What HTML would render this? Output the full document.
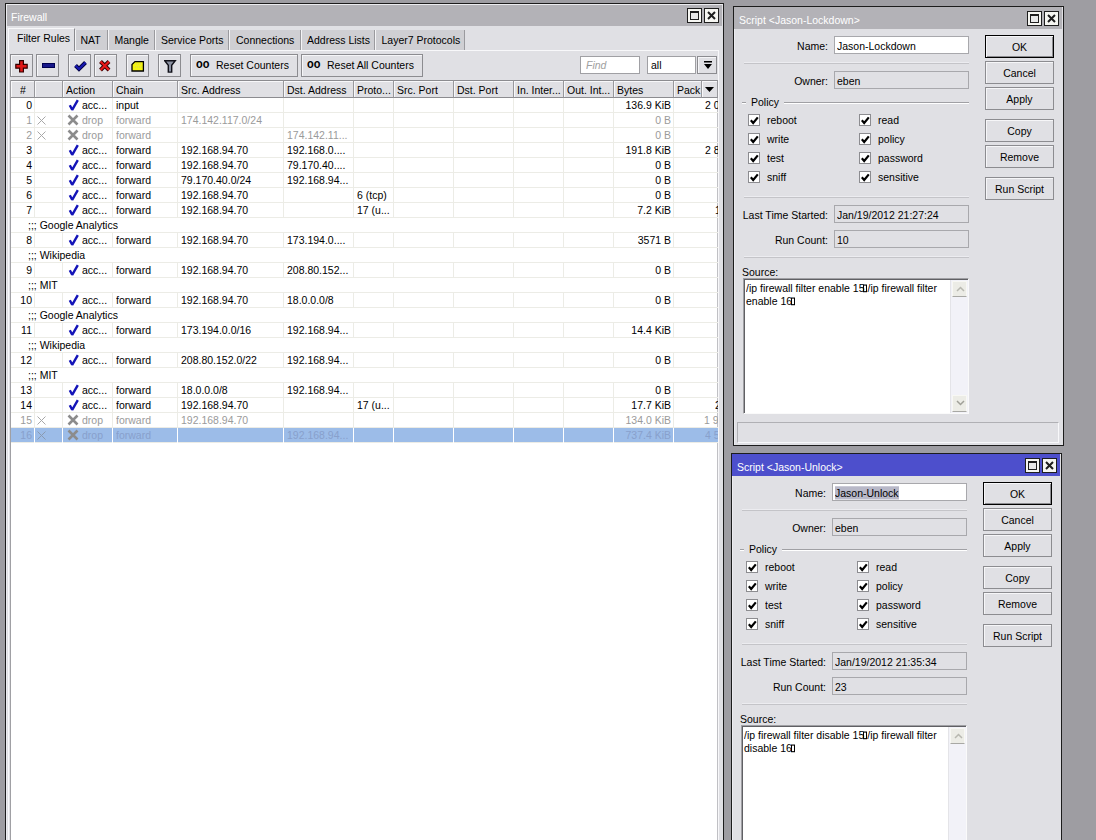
<!DOCTYPE html><html><head><meta charset="utf-8"><style>
*{margin:0;padding:0;box-sizing:border-box}
html,body{width:1096px;height:840px;overflow:hidden;background:#9e9da2}
body{position:relative;font-family:"Liberation Sans",sans-serif;font-size:10.5px;color:#000;}
span{transform:scaleY(1.1);transform-origin:50% 60%}
div,span{position:absolute;white-space:pre}
.t{line-height:13px}
.win{background:#e0e0e4;border:1px solid #1c1c1c}
.title{color:#fff;font-size:10.5px;line-height:13px;-webkit-text-stroke:0}
.btn{background:#e0e0e4;border:1px solid #8c8c90;box-shadow:inset 1px 1px 0 #f6f6f8}
.tab{background:#cfcfd3;border-left:1px solid #f4f4f6;border-right:1px solid #9a9a9e;top:30px;height:20px}
.tab span{top:4px}
.hc{top:0;height:18px;border-top:1px solid #8c8c90;border-right:1px solid #98989c;border-bottom:1px solid #8c8c90;box-shadow:inset 1px 1px 0 #f8f8fa}
.hc span{left:3px;top:3px}
.row{left:0;width:707px;height:15px;border-bottom:1px solid #ecece6}
.c{top:0;height:15px;border-right:1px solid #ecece6}
.c span{top:1px}
.r{right:2px}
.dis{color:#9a9a9a}
.selr{color:#88a0cc}
.fld{background:#fff;border:1px solid #a0a0a4}
.ro{background:#e0e0e4;border:1px solid #a8a8ac}
.sep{height:2px;border-top:1px solid #ececf0;border-bottom:1px solid #c4c4c8}
.grp{height:2px;border-top:1px solid #a0a0a4;border-bottom:1px solid #fff}
.cb{width:12px;height:12px;background:#fff;border:1px solid #8c8c90}
</style></head><body>

<div class="win" style="left:5px;top:3px;width:719px;height:860px;box-shadow:inset 1px 1px 0 #ececf0">
<div style="left:1px;top:1px;width:715px;height:21px;background:#b3b2b7"></div>
<span class="title" style="left:5px;top:7px">Firewall</span>
<svg style="position:absolute;left:681px;top:4px" width="15" height="15" viewBox="0 0 15 15"><rect x="0.5" y="0.5" width="14" height="14" fill="#f6f6f2" stroke="#1e1e1e"/><rect x="3.5" y="3.5" width="8" height="8" fill="#e8e8e8" stroke="#1e1e1e"/><rect x="3" y="3" width="9" height="2" fill="#1e1e1e"/></svg>
<svg style="position:absolute;left:698px;top:4px" width="15" height="15" viewBox="0 0 15 15"><rect x="0.5" y="0.5" width="14" height="14" fill="#f6f6f2" stroke="#1e1e1e"/><path d="M4 4l7 7M11 4l-7 7" stroke="#1e1e1e" stroke-width="2"/></svg>
</div>
<div class="tab" style="left:75px;width:33px"><span style="left:4.5px">NAT</span></div>
<div class="tab" style="left:108px;width:47px"><span style="left:5.5px">Mangle</span></div>
<div class="tab" style="left:155px;width:74px"><span style="left:5.0px">Service Ports</span></div>
<div class="tab" style="left:229px;width:72px"><span style="left:6.0px">Connections</span></div>
<div class="tab" style="left:301px;width:74px"><span style="left:5.0px">Address Lists</span></div>
<div class="tab" style="left:375px;width:90px"><span style="left:5.5px">Layer7 Protocols</span></div>
<div style="left:8px;top:28px;width:67px;height:23px;background:#e0e0e4;border-top:1px solid #f8f8fa;border-left:1px solid #f8f8fa;border-right:1px solid #8a8a8e"><span style="left:8px;top:3px">Filter Rules</span></div>
<div style="left:75px;top:50px;width:644px;height:1px;background:#f8f8fa"></div>
<div style="left:718px;top:50px;width:1px;height:800px;background:#f8f8fa"></div>
<div style="left:8px;top:50px;width:1px;height:800px;background:#f8f8fa"></div>
<div class="btn" style="left:10px;top:54px;width:23px;height:23px"><svg style="position:absolute;left:4px;top:4px" width="14" height="14" viewBox="0 0 14 14"><path d="M4.6 1.6h3.8v3.8h3.8v3.8h-3.8v3.8h-3.8v-3.8h-3.8v-3.8h3.8z" fill="#e01818" stroke="#300" stroke-width="1.2"/></svg></div>
<div class="btn" style="left:36px;top:54px;width:23px;height:23px"><svg style="position:absolute;left:5px;top:8px" width="14" height="6" viewBox="0 0 14 6"><rect x="0.5" y="0.5" width="12" height="4" fill="#18188a" stroke="#000050"/></svg></div>
<div class="btn" style="left:68px;top:54px;width:23px;height:23px"><svg style="position:absolute;left:5px;top:5px" width="14" height="14" viewBox="0 0 14 14"><path d="M1.5 5.5l3.5 3.5l6.5-6.5" fill="none" stroke="#000040" stroke-width="4"/><path d="M1.5 5.5l3.5 3.5l6.5-6.5" fill="none" stroke="#1818b0" stroke-width="2.2"/></svg></div>
<div class="btn" style="left:94px;top:54px;width:23px;height:23px"><svg style="position:absolute;left:4px;top:5px" width="14" height="14" viewBox="0 0 14 14"><path d="M1.5 1.5l8.5 8.5M10 1.5l-8.5 8.5" fill="none" stroke="#300" stroke-width="4"/><path d="M1.5 1.5l8.5 8.5M10 1.5l-8.5 8.5" fill="none" stroke="#e81818" stroke-width="2.2"/></svg></div>
<div class="btn" style="left:126px;top:54px;width:23px;height:23px"><svg style="position:absolute;left:4px;top:6px" width="15" height="12" viewBox="0 0 15 12"><path d="M4 0.6h8.4v9.4h-11.4v-6.4z" fill="#f4f410" stroke="#000" stroke-width="1.3"/><path d="M5 3h6M4 6h7" stroke="#d0d060" stroke-dasharray="1 1"/></svg></div>
<div class="btn" style="left:158px;top:54px;width:23px;height:23px"><svg style="position:absolute;left:5px;top:5px" width="14" height="14" viewBox="0 0 14 14"><path d="M0.7 0.7h10.6l-3.6 4.6v6.8h-3.4v-6.8z" fill="#8a90a0" stroke="#101018" stroke-width="1.4"/></svg></div>
<div class="btn" style="left:190px;top:54px;width:108px;height:23px"><span style="left:5px;top:3px;font-weight:bold;font-size:11px">oo</span><span style="left:25px;top:4px">Reset Counters</span></div>
<div class="btn" style="left:301px;top:54px;width:122px;height:23px"><span style="left:5px;top:3px;font-weight:bold;font-size:11px">oo</span><span style="left:25px;top:4px">Reset All Counters</span></div>
<div class="fld" style="left:580px;top:56px;width:60px;height:18px"><span style="left:5px;top:2px;color:#a0a0a0;font-style:italic">Find</span></div>
<div class="fld" style="left:647px;top:56px;width:49px;height:18px"><span style="left:3px;top:2px">all</span></div>
<div class="btn" style="left:697px;top:56px;width:20px;height:18px"><svg style="position:absolute;left:5px;top:4px" width="10" height="10" viewBox="0 0 10 10"><path d="M1 0h8v1.5h-8z M1 3h8l-4 5z" fill="#000"/></svg></div>
<div style="left:10px;top:80px;width:708px;height:770px;background:#fff;border-left:1px solid #a0a0a4;border-right:1px solid #c0c0c4">
<div class="hc" style="left:0px;width:24px;background:#e0e0e4"><span style="left:9px">#</span></div>
<div class="hc" style="left:24px;width:28px;background:#e0e0e4"></div>
<div class="hc" style="left:52px;width:50px;background:#e0e0e4"><span>Action</span></div>
<div class="hc" style="left:102px;width:65px;background:#e0e0e4"><span>Chain</span></div>
<div class="hc" style="left:167px;width:106px;background:#e0e0e4"><span>Src. Address</span></div>
<div class="hc" style="left:273px;width:70px;background:#e0e0e4"><span>Dst. Address</span></div>
<div class="hc" style="left:343px;width:40px;background:#e0e0e4"><span>Proto...</span></div>
<div class="hc" style="left:383px;width:60px;background:#e0e0e4"><span>Src. Port</span></div>
<div class="hc" style="left:443px;width:60px;background:#e0e0e4"><span>Dst. Port</span></div>
<div class="hc" style="left:503px;width:50px;background:#e0e0e4"><span>In. Inter...</span></div>
<div class="hc" style="left:553px;width:50px;background:#e0e0e4"><span>Out. Int...</span></div>
<div class="hc" style="left:603px;width:60px;background:#e0e0e4"><span>Bytes</span></div>
<div class="hc" style="left:663px;width:28px;background:#e0e0e4"><span>Pack</span></div>
<div class="hc" style="left:691px;width:16px;background:#e0e0e4"></div>
<svg style="position:absolute;left:694px;top:6px" width="10" height="8" viewBox="0 0 10 8"><path d="M0 1h9l-4.5 5z" fill="#000"/></svg>
<div class="row" style="top:18px">
<div class="c" style="left:0px;width:24px"><span class="r">0</span></div>
<div class="c" style="left:24px;width:28px"></div>
<div class="c" style="left:52px;width:50px"><svg style="position:absolute;left:5px;top:1px" width="12" height="13" viewBox="0 0 12 13"><path d="M1.8 6.2l2.4 4.6l5.6-9.6" fill="none" stroke="#1414b8" stroke-width="2.4" stroke-linejoin="bevel"/></svg><span style="left:19px">acc...</span></div>
<div class="c" style="left:102px;width:65px"><span style="left:3px">input</span></div>
<div class="c" style="left:167px;width:106px"><span style="left:3px"></span></div>
<div class="c" style="left:273px;width:70px"><span style="left:3px"></span></div>
<div class="c" style="left:343px;width:40px"><span style="left:3px"></span></div>
<div class="c" style="left:383px;width:60px"></div>
<div class="c" style="left:443px;width:60px"></div>
<div class="c" style="left:503px;width:50px"></div>
<div class="c" style="left:553px;width:50px"></div>
<div class="c" style="left:603px;width:60px"><span class="r">136.9 KiB</span></div>
<div class="c" style="left:663px;width:44px;overflow:hidden;border-right:none"><span style="left:31px">2 048</span></div>
</div>
<div class="row dis" style="top:33px">
<div class="c" style="left:0px;width:24px"><span class="r">1</span></div>
<div class="c" style="left:24px;width:28px"><svg style="position:absolute;left:2px;top:3px" width="10" height="10" viewBox="0 0 10 10"><path d="M0.5 0.5l8 8M8.5 0.5l-8 8" stroke="#a8a8a8" stroke-width="1"/></svg></div>
<div class="c" style="left:52px;width:50px"><svg style="position:absolute;left:4px;top:1px" width="12" height="12" viewBox="0 0 12 12"><path d="M1.5 1.5l9 9M10.5 1.5l-9 9" fill="none" stroke="#8c8c8c" stroke-width="2.6"/></svg><span style="left:19px">drop</span></div>
<div class="c" style="left:102px;width:65px"><span style="left:3px">forward</span></div>
<div class="c" style="left:167px;width:106px"><span style="left:3px">174.142.117.0/24</span></div>
<div class="c" style="left:273px;width:70px"><span style="left:3px"></span></div>
<div class="c" style="left:343px;width:40px"><span style="left:3px"></span></div>
<div class="c" style="left:383px;width:60px"></div>
<div class="c" style="left:443px;width:60px"></div>
<div class="c" style="left:503px;width:50px"></div>
<div class="c" style="left:553px;width:50px"></div>
<div class="c" style="left:603px;width:60px"><span class="r">0 B</span></div>
<div class="c" style="left:663px;width:44px;overflow:hidden;border-right:none"><span style="left:-634px"></span></div>
</div>
<div class="row dis" style="top:48px">
<div class="c" style="left:0px;width:24px"><span class="r">2</span></div>
<div class="c" style="left:24px;width:28px"><svg style="position:absolute;left:2px;top:3px" width="10" height="10" viewBox="0 0 10 10"><path d="M0.5 0.5l8 8M8.5 0.5l-8 8" stroke="#a8a8a8" stroke-width="1"/></svg></div>
<div class="c" style="left:52px;width:50px"><svg style="position:absolute;left:4px;top:1px" width="12" height="12" viewBox="0 0 12 12"><path d="M1.5 1.5l9 9M10.5 1.5l-9 9" fill="none" stroke="#8c8c8c" stroke-width="2.6"/></svg><span style="left:19px">drop</span></div>
<div class="c" style="left:102px;width:65px"><span style="left:3px">forward</span></div>
<div class="c" style="left:167px;width:106px"><span style="left:3px"></span></div>
<div class="c" style="left:273px;width:70px"><span style="left:3px">174.142.11...</span></div>
<div class="c" style="left:343px;width:40px"><span style="left:3px"></span></div>
<div class="c" style="left:383px;width:60px"></div>
<div class="c" style="left:443px;width:60px"></div>
<div class="c" style="left:503px;width:50px"></div>
<div class="c" style="left:553px;width:50px"></div>
<div class="c" style="left:603px;width:60px"><span class="r">0 B</span></div>
<div class="c" style="left:663px;width:44px;overflow:hidden;border-right:none"><span style="left:-634px"></span></div>
</div>
<div class="row" style="top:63px">
<div class="c" style="left:0px;width:24px"><span class="r">3</span></div>
<div class="c" style="left:24px;width:28px"></div>
<div class="c" style="left:52px;width:50px"><svg style="position:absolute;left:5px;top:1px" width="12" height="13" viewBox="0 0 12 13"><path d="M1.8 6.2l2.4 4.6l5.6-9.6" fill="none" stroke="#1414b8" stroke-width="2.4" stroke-linejoin="bevel"/></svg><span style="left:19px">acc...</span></div>
<div class="c" style="left:102px;width:65px"><span style="left:3px">forward</span></div>
<div class="c" style="left:167px;width:106px"><span style="left:3px">192.168.94.70</span></div>
<div class="c" style="left:273px;width:70px"><span style="left:3px">192.168.0....</span></div>
<div class="c" style="left:343px;width:40px"><span style="left:3px"></span></div>
<div class="c" style="left:383px;width:60px"></div>
<div class="c" style="left:443px;width:60px"></div>
<div class="c" style="left:503px;width:50px"></div>
<div class="c" style="left:553px;width:50px"></div>
<div class="c" style="left:603px;width:60px"><span class="r">191.8 KiB</span></div>
<div class="c" style="left:663px;width:44px;overflow:hidden;border-right:none"><span style="left:31px">2 873</span></div>
</div>
<div class="row" style="top:78px">
<div class="c" style="left:0px;width:24px"><span class="r">4</span></div>
<div class="c" style="left:24px;width:28px"></div>
<div class="c" style="left:52px;width:50px"><svg style="position:absolute;left:5px;top:1px" width="12" height="13" viewBox="0 0 12 13"><path d="M1.8 6.2l2.4 4.6l5.6-9.6" fill="none" stroke="#1414b8" stroke-width="2.4" stroke-linejoin="bevel"/></svg><span style="left:19px">acc...</span></div>
<div class="c" style="left:102px;width:65px"><span style="left:3px">forward</span></div>
<div class="c" style="left:167px;width:106px"><span style="left:3px">192.168.94.70</span></div>
<div class="c" style="left:273px;width:70px"><span style="left:3px">79.170.40....</span></div>
<div class="c" style="left:343px;width:40px"><span style="left:3px"></span></div>
<div class="c" style="left:383px;width:60px"></div>
<div class="c" style="left:443px;width:60px"></div>
<div class="c" style="left:503px;width:50px"></div>
<div class="c" style="left:553px;width:50px"></div>
<div class="c" style="left:603px;width:60px"><span class="r">0 B</span></div>
<div class="c" style="left:663px;width:44px;overflow:hidden;border-right:none"><span style="left:-634px"></span></div>
</div>
<div class="row" style="top:93px">
<div class="c" style="left:0px;width:24px"><span class="r">5</span></div>
<div class="c" style="left:24px;width:28px"></div>
<div class="c" style="left:52px;width:50px"><svg style="position:absolute;left:5px;top:1px" width="12" height="13" viewBox="0 0 12 13"><path d="M1.8 6.2l2.4 4.6l5.6-9.6" fill="none" stroke="#1414b8" stroke-width="2.4" stroke-linejoin="bevel"/></svg><span style="left:19px">acc...</span></div>
<div class="c" style="left:102px;width:65px"><span style="left:3px">forward</span></div>
<div class="c" style="left:167px;width:106px"><span style="left:3px">79.170.40.0/24</span></div>
<div class="c" style="left:273px;width:70px"><span style="left:3px">192.168.94...</span></div>
<div class="c" style="left:343px;width:40px"><span style="left:3px"></span></div>
<div class="c" style="left:383px;width:60px"></div>
<div class="c" style="left:443px;width:60px"></div>
<div class="c" style="left:503px;width:50px"></div>
<div class="c" style="left:553px;width:50px"></div>
<div class="c" style="left:603px;width:60px"><span class="r">0 B</span></div>
<div class="c" style="left:663px;width:44px;overflow:hidden;border-right:none"><span style="left:-634px"></span></div>
</div>
<div class="row" style="top:108px">
<div class="c" style="left:0px;width:24px"><span class="r">6</span></div>
<div class="c" style="left:24px;width:28px"></div>
<div class="c" style="left:52px;width:50px"><svg style="position:absolute;left:5px;top:1px" width="12" height="13" viewBox="0 0 12 13"><path d="M1.8 6.2l2.4 4.6l5.6-9.6" fill="none" stroke="#1414b8" stroke-width="2.4" stroke-linejoin="bevel"/></svg><span style="left:19px">acc...</span></div>
<div class="c" style="left:102px;width:65px"><span style="left:3px">forward</span></div>
<div class="c" style="left:167px;width:106px"><span style="left:3px">192.168.94.70</span></div>
<div class="c" style="left:273px;width:70px"><span style="left:3px"></span></div>
<div class="c" style="left:343px;width:40px"><span style="left:3px">6 (tcp)</span></div>
<div class="c" style="left:383px;width:60px"></div>
<div class="c" style="left:443px;width:60px"></div>
<div class="c" style="left:503px;width:50px"></div>
<div class="c" style="left:553px;width:50px"></div>
<div class="c" style="left:603px;width:60px"><span class="r">0 B</span></div>
<div class="c" style="left:663px;width:44px;overflow:hidden;border-right:none"><span style="left:-634px"></span></div>
</div>
<div class="row" style="top:123px">
<div class="c" style="left:0px;width:24px"><span class="r">7</span></div>
<div class="c" style="left:24px;width:28px"></div>
<div class="c" style="left:52px;width:50px"><svg style="position:absolute;left:5px;top:1px" width="12" height="13" viewBox="0 0 12 13"><path d="M1.8 6.2l2.4 4.6l5.6-9.6" fill="none" stroke="#1414b8" stroke-width="2.4" stroke-linejoin="bevel"/></svg><span style="left:19px">acc...</span></div>
<div class="c" style="left:102px;width:65px"><span style="left:3px">forward</span></div>
<div class="c" style="left:167px;width:106px"><span style="left:3px">192.168.94.70</span></div>
<div class="c" style="left:273px;width:70px"><span style="left:3px"></span></div>
<div class="c" style="left:343px;width:40px"><span style="left:3px">17 (u...</span></div>
<div class="c" style="left:383px;width:60px"></div>
<div class="c" style="left:443px;width:60px"></div>
<div class="c" style="left:503px;width:50px"></div>
<div class="c" style="left:553px;width:50px"></div>
<div class="c" style="left:603px;width:60px"><span class="r">7.2 KiB</span></div>
<div class="c" style="left:663px;width:44px;overflow:hidden;border-right:none"><span style="left:41px">137</span></div>
</div>
<div class="row" style="top:138px"><span style="left:17px;top:1px">;;; Google Analytics</span></div>
<div class="row" style="top:153px">
<div class="c" style="left:0px;width:24px"><span class="r">8</span></div>
<div class="c" style="left:24px;width:28px"></div>
<div class="c" style="left:52px;width:50px"><svg style="position:absolute;left:5px;top:1px" width="12" height="13" viewBox="0 0 12 13"><path d="M1.8 6.2l2.4 4.6l5.6-9.6" fill="none" stroke="#1414b8" stroke-width="2.4" stroke-linejoin="bevel"/></svg><span style="left:19px">acc...</span></div>
<div class="c" style="left:102px;width:65px"><span style="left:3px">forward</span></div>
<div class="c" style="left:167px;width:106px"><span style="left:3px">192.168.94.70</span></div>
<div class="c" style="left:273px;width:70px"><span style="left:3px">173.194.0....</span></div>
<div class="c" style="left:343px;width:40px"><span style="left:3px"></span></div>
<div class="c" style="left:383px;width:60px"></div>
<div class="c" style="left:443px;width:60px"></div>
<div class="c" style="left:503px;width:50px"></div>
<div class="c" style="left:553px;width:50px"></div>
<div class="c" style="left:603px;width:60px"><span class="r">3571 B</span></div>
<div class="c" style="left:663px;width:44px;overflow:hidden;border-right:none"><span style="left:-634px"></span></div>
</div>
<div class="row" style="top:168px"><span style="left:17px;top:1px">;;; Wikipedia</span></div>
<div class="row" style="top:183px">
<div class="c" style="left:0px;width:24px"><span class="r">9</span></div>
<div class="c" style="left:24px;width:28px"></div>
<div class="c" style="left:52px;width:50px"><svg style="position:absolute;left:5px;top:1px" width="12" height="13" viewBox="0 0 12 13"><path d="M1.8 6.2l2.4 4.6l5.6-9.6" fill="none" stroke="#1414b8" stroke-width="2.4" stroke-linejoin="bevel"/></svg><span style="left:19px">acc...</span></div>
<div class="c" style="left:102px;width:65px"><span style="left:3px">forward</span></div>
<div class="c" style="left:167px;width:106px"><span style="left:3px">192.168.94.70</span></div>
<div class="c" style="left:273px;width:70px"><span style="left:3px">208.80.152...</span></div>
<div class="c" style="left:343px;width:40px"><span style="left:3px"></span></div>
<div class="c" style="left:383px;width:60px"></div>
<div class="c" style="left:443px;width:60px"></div>
<div class="c" style="left:503px;width:50px"></div>
<div class="c" style="left:553px;width:50px"></div>
<div class="c" style="left:603px;width:60px"><span class="r">0 B</span></div>
<div class="c" style="left:663px;width:44px;overflow:hidden;border-right:none"><span style="left:-634px"></span></div>
</div>
<div class="row" style="top:198px"><span style="left:17px;top:1px">;;; MIT</span></div>
<div class="row" style="top:213px">
<div class="c" style="left:0px;width:24px"><span class="r">10</span></div>
<div class="c" style="left:24px;width:28px"></div>
<div class="c" style="left:52px;width:50px"><svg style="position:absolute;left:5px;top:1px" width="12" height="13" viewBox="0 0 12 13"><path d="M1.8 6.2l2.4 4.6l5.6-9.6" fill="none" stroke="#1414b8" stroke-width="2.4" stroke-linejoin="bevel"/></svg><span style="left:19px">acc...</span></div>
<div class="c" style="left:102px;width:65px"><span style="left:3px">forward</span></div>
<div class="c" style="left:167px;width:106px"><span style="left:3px">192.168.94.70</span></div>
<div class="c" style="left:273px;width:70px"><span style="left:3px">18.0.0.0/8</span></div>
<div class="c" style="left:343px;width:40px"><span style="left:3px"></span></div>
<div class="c" style="left:383px;width:60px"></div>
<div class="c" style="left:443px;width:60px"></div>
<div class="c" style="left:503px;width:50px"></div>
<div class="c" style="left:553px;width:50px"></div>
<div class="c" style="left:603px;width:60px"><span class="r">0 B</span></div>
<div class="c" style="left:663px;width:44px;overflow:hidden;border-right:none"><span style="left:-634px"></span></div>
</div>
<div class="row" style="top:228px"><span style="left:17px;top:1px">;;; Google Analytics</span></div>
<div class="row" style="top:243px">
<div class="c" style="left:0px;width:24px"><span class="r">11</span></div>
<div class="c" style="left:24px;width:28px"></div>
<div class="c" style="left:52px;width:50px"><svg style="position:absolute;left:5px;top:1px" width="12" height="13" viewBox="0 0 12 13"><path d="M1.8 6.2l2.4 4.6l5.6-9.6" fill="none" stroke="#1414b8" stroke-width="2.4" stroke-linejoin="bevel"/></svg><span style="left:19px">acc...</span></div>
<div class="c" style="left:102px;width:65px"><span style="left:3px">forward</span></div>
<div class="c" style="left:167px;width:106px"><span style="left:3px">173.194.0.0/16</span></div>
<div class="c" style="left:273px;width:70px"><span style="left:3px">192.168.94...</span></div>
<div class="c" style="left:343px;width:40px"><span style="left:3px"></span></div>
<div class="c" style="left:383px;width:60px"></div>
<div class="c" style="left:443px;width:60px"></div>
<div class="c" style="left:503px;width:50px"></div>
<div class="c" style="left:553px;width:50px"></div>
<div class="c" style="left:603px;width:60px"><span class="r">14.4 KiB</span></div>
<div class="c" style="left:663px;width:44px;overflow:hidden;border-right:none"><span style="left:-634px"></span></div>
</div>
<div class="row" style="top:258px"><span style="left:17px;top:1px">;;; Wikipedia</span></div>
<div class="row" style="top:273px">
<div class="c" style="left:0px;width:24px"><span class="r">12</span></div>
<div class="c" style="left:24px;width:28px"></div>
<div class="c" style="left:52px;width:50px"><svg style="position:absolute;left:5px;top:1px" width="12" height="13" viewBox="0 0 12 13"><path d="M1.8 6.2l2.4 4.6l5.6-9.6" fill="none" stroke="#1414b8" stroke-width="2.4" stroke-linejoin="bevel"/></svg><span style="left:19px">acc...</span></div>
<div class="c" style="left:102px;width:65px"><span style="left:3px">forward</span></div>
<div class="c" style="left:167px;width:106px"><span style="left:3px">208.80.152.0/22</span></div>
<div class="c" style="left:273px;width:70px"><span style="left:3px">192.168.94...</span></div>
<div class="c" style="left:343px;width:40px"><span style="left:3px"></span></div>
<div class="c" style="left:383px;width:60px"></div>
<div class="c" style="left:443px;width:60px"></div>
<div class="c" style="left:503px;width:50px"></div>
<div class="c" style="left:553px;width:50px"></div>
<div class="c" style="left:603px;width:60px"><span class="r">0 B</span></div>
<div class="c" style="left:663px;width:44px;overflow:hidden;border-right:none"><span style="left:-634px"></span></div>
</div>
<div class="row" style="top:288px"><span style="left:17px;top:1px">;;; MIT</span></div>
<div class="row" style="top:303px">
<div class="c" style="left:0px;width:24px"><span class="r">13</span></div>
<div class="c" style="left:24px;width:28px"></div>
<div class="c" style="left:52px;width:50px"><svg style="position:absolute;left:5px;top:1px" width="12" height="13" viewBox="0 0 12 13"><path d="M1.8 6.2l2.4 4.6l5.6-9.6" fill="none" stroke="#1414b8" stroke-width="2.4" stroke-linejoin="bevel"/></svg><span style="left:19px">acc...</span></div>
<div class="c" style="left:102px;width:65px"><span style="left:3px">forward</span></div>
<div class="c" style="left:167px;width:106px"><span style="left:3px">18.0.0.0/8</span></div>
<div class="c" style="left:273px;width:70px"><span style="left:3px">192.168.94...</span></div>
<div class="c" style="left:343px;width:40px"><span style="left:3px"></span></div>
<div class="c" style="left:383px;width:60px"></div>
<div class="c" style="left:443px;width:60px"></div>
<div class="c" style="left:503px;width:50px"></div>
<div class="c" style="left:553px;width:50px"></div>
<div class="c" style="left:603px;width:60px"><span class="r">0 B</span></div>
<div class="c" style="left:663px;width:44px;overflow:hidden;border-right:none"><span style="left:-634px"></span></div>
</div>
<div class="row" style="top:318px">
<div class="c" style="left:0px;width:24px"><span class="r">14</span></div>
<div class="c" style="left:24px;width:28px"></div>
<div class="c" style="left:52px;width:50px"><svg style="position:absolute;left:5px;top:1px" width="12" height="13" viewBox="0 0 12 13"><path d="M1.8 6.2l2.4 4.6l5.6-9.6" fill="none" stroke="#1414b8" stroke-width="2.4" stroke-linejoin="bevel"/></svg><span style="left:19px">acc...</span></div>
<div class="c" style="left:102px;width:65px"><span style="left:3px">forward</span></div>
<div class="c" style="left:167px;width:106px"><span style="left:3px">192.168.94.70</span></div>
<div class="c" style="left:273px;width:70px"><span style="left:3px"></span></div>
<div class="c" style="left:343px;width:40px"><span style="left:3px">17 (u...</span></div>
<div class="c" style="left:383px;width:60px"></div>
<div class="c" style="left:443px;width:60px"></div>
<div class="c" style="left:503px;width:50px"></div>
<div class="c" style="left:553px;width:50px"></div>
<div class="c" style="left:603px;width:60px"><span class="r">17.7 KiB</span></div>
<div class="c" style="left:663px;width:44px;overflow:hidden;border-right:none"><span style="left:41px">241</span></div>
</div>
<div class="row dis" style="top:333px">
<div class="c" style="left:0px;width:24px"><span class="r">15</span></div>
<div class="c" style="left:24px;width:28px"><svg style="position:absolute;left:2px;top:3px" width="10" height="10" viewBox="0 0 10 10"><path d="M0.5 0.5l8 8M8.5 0.5l-8 8" stroke="#a8a8a8" stroke-width="1"/></svg></div>
<div class="c" style="left:52px;width:50px"><svg style="position:absolute;left:4px;top:1px" width="12" height="12" viewBox="0 0 12 12"><path d="M1.5 1.5l9 9M10.5 1.5l-9 9" fill="none" stroke="#8c8c8c" stroke-width="2.6"/></svg><span style="left:19px">drop</span></div>
<div class="c" style="left:102px;width:65px"><span style="left:3px">forward</span></div>
<div class="c" style="left:167px;width:106px"><span style="left:3px">192.168.94.70</span></div>
<div class="c" style="left:273px;width:70px"><span style="left:3px"></span></div>
<div class="c" style="left:343px;width:40px"><span style="left:3px"></span></div>
<div class="c" style="left:383px;width:60px"></div>
<div class="c" style="left:443px;width:60px"></div>
<div class="c" style="left:503px;width:50px"></div>
<div class="c" style="left:553px;width:50px"></div>
<div class="c" style="left:603px;width:60px"><span class="r">134.0 KiB</span></div>
<div class="c" style="left:663px;width:44px;overflow:hidden;border-right:none"><span style="left:30px">1 961</span></div>
</div>
<div class="row selr" style="top:348px;background:#9cbce8">
<div class="c" style="left:0px;width:24px;border-right-color:#fff"><span class="r">16</span></div>
<div class="c" style="left:24px;width:28px;border-right-color:#fff"><svg style="position:absolute;left:2px;top:3px" width="10" height="10" viewBox="0 0 10 10"><path d="M0.5 0.5l8 8M8.5 0.5l-8 8" stroke="#8a9ab0" stroke-width="1"/></svg></div>
<div class="c" style="left:52px;width:50px;border-right-color:#fff"><svg style="position:absolute;left:4px;top:1px" width="12" height="12" viewBox="0 0 12 12"><path d="M1.5 1.5l9 9M10.5 1.5l-9 9" fill="none" stroke="#8c8c8c" stroke-width="2.6"/></svg><span style="left:19px">drop</span></div>
<div class="c" style="left:102px;width:65px;border-right-color:#fff"><span style="left:3px">forward</span></div>
<div class="c" style="left:167px;width:106px;border-right-color:#fff"><span style="left:3px"></span></div>
<div class="c" style="left:273px;width:70px;border-right-color:#fff"><span style="left:3px">192.168.94...</span></div>
<div class="c" style="left:343px;width:40px;border-right-color:#fff"><span style="left:3px"></span></div>
<div class="c" style="left:383px;width:60px;border-right-color:#fff"></div>
<div class="c" style="left:443px;width:60px;border-right-color:#fff"></div>
<div class="c" style="left:503px;width:50px;border-right-color:#fff"></div>
<div class="c" style="left:553px;width:50px;border-right-color:#fff"></div>
<div class="c" style="left:603px;width:60px;border-right-color:#fff"><span class="r">737.4 KiB</span></div>
<div class="c" style="left:663px;width:44px;overflow:hidden;border-right:none"><span style="left:31px">4 512</span></div>
</div>
</div>
<div class="win" style="left:733px;top:6px;width:331px;height:440px;box-shadow:inset 1px 1px 0 #ececf0">
<div style="left:0px;top:0px;width:328px;height:22px;background:#b3b2b7"></div>
<span class="title" style="left:5px;top:7px">Script &lt;Jason-Lockdown&gt;</span>
<svg style="position:absolute;left:293px;top:4px" width="15" height="15" viewBox="0 0 15 15"><rect x="0.5" y="0.5" width="14" height="14" fill="#f6f6f2" stroke="#1e1e1e"/><rect x="3.5" y="3.5" width="8" height="8" fill="#e8e8e8" stroke="#1e1e1e"/><rect x="3" y="3" width="9" height="2" fill="#1e1e1e"/></svg>
<svg style="position:absolute;left:310px;top:4px" width="15" height="15" viewBox="0 0 15 15"><rect x="0.5" y="0.5" width="14" height="14" fill="#f6f6f2" stroke="#1e1e1e"/><path d="M4 4l7 7M11 4l-7 7" stroke="#1e1e1e" stroke-width="2"/></svg>
<span style="right:235px;top:33px">Name:</span>
<div class="fld" style="left:100px;top:29px;width:135px;height:18px;box-shadow:none;border-color:#a8a8ac"><span style="left:2px;top:3px">Jason-Lockdown</span></div>
<div class="sep" style="left:10px;top:55px;width:225px"></div>
<span style="right:235px;top:68px">Owner:</span>
<div class="ro" style="left:100px;top:64px;width:135px;height:18px"><span style="left:2px;top:3px">eben</span></div>
<div class="grp" style="left:8px;top:95px;width:4px"></div>
<span style="left:17px;top:89px">Policy</span>
<div class="grp" style="left:50px;top:95px;width:185px"></div>
<div class="cb" style="left:14px;top:107px"><svg style="position:absolute;left:1px;top:1px" width="9" height="9" viewBox="0 0 9 9"><path d="M0.8 4.2l2.4 2.8l4.6-5.6" fill="none" stroke="#000" stroke-width="2.2"/></svg></div>
<span style="left:33px;top:107px">reboot</span>
<div class="cb" style="left:125px;top:107px"><svg style="position:absolute;left:1px;top:1px" width="9" height="9" viewBox="0 0 9 9"><path d="M0.8 4.2l2.4 2.8l4.6-5.6" fill="none" stroke="#000" stroke-width="2.2"/></svg></div>
<span style="left:144px;top:107px">read</span>
<div class="cb" style="left:14px;top:126px"><svg style="position:absolute;left:1px;top:1px" width="9" height="9" viewBox="0 0 9 9"><path d="M0.8 4.2l2.4 2.8l4.6-5.6" fill="none" stroke="#000" stroke-width="2.2"/></svg></div>
<span style="left:33px;top:126px">write</span>
<div class="cb" style="left:125px;top:126px"><svg style="position:absolute;left:1px;top:1px" width="9" height="9" viewBox="0 0 9 9"><path d="M0.8 4.2l2.4 2.8l4.6-5.6" fill="none" stroke="#000" stroke-width="2.2"/></svg></div>
<span style="left:144px;top:126px">policy</span>
<div class="cb" style="left:14px;top:145px"><svg style="position:absolute;left:1px;top:1px" width="9" height="9" viewBox="0 0 9 9"><path d="M0.8 4.2l2.4 2.8l4.6-5.6" fill="none" stroke="#000" stroke-width="2.2"/></svg></div>
<span style="left:33px;top:145px">test</span>
<div class="cb" style="left:125px;top:145px"><svg style="position:absolute;left:1px;top:1px" width="9" height="9" viewBox="0 0 9 9"><path d="M0.8 4.2l2.4 2.8l4.6-5.6" fill="none" stroke="#000" stroke-width="2.2"/></svg></div>
<span style="left:144px;top:145px">password</span>
<div class="cb" style="left:14px;top:164px"><svg style="position:absolute;left:1px;top:1px" width="9" height="9" viewBox="0 0 9 9"><path d="M0.8 4.2l2.4 2.8l4.6-5.6" fill="none" stroke="#000" stroke-width="2.2"/></svg></div>
<span style="left:33px;top:164px">sniff</span>
<div class="cb" style="left:125px;top:164px"><svg style="position:absolute;left:1px;top:1px" width="9" height="9" viewBox="0 0 9 9"><path d="M0.8 4.2l2.4 2.8l4.6-5.6" fill="none" stroke="#000" stroke-width="2.2"/></svg></div>
<span style="left:144px;top:164px">sensitive</span>
<div class="sep" style="left:10px;top:189px;width:225px"></div>
<span style="right:235px;top:202px">Last Time Started:</span>
<div class="ro" style="left:100px;top:198px;width:135px;height:18px"><span style="left:2px;top:3px">Jan/19/2012 21:27:24</span></div>
<span style="right:235px;top:227px">Run Count:</span>
<div class="ro" style="left:100px;top:223px;width:135px;height:18px"><span style="left:2px;top:3px">10</span></div>
<div class="sep" style="left:10px;top:249px;width:225px"></div>
<span style="left:8px;top:259px">Source:</span>
<div class="fld" style="left:9px;top:271px;width:226px;height:136px;border-color:#a0a0a4 #fafafa #fafafa #a0a0a4;box-shadow:inset 1px 1px 0 #606064"><span class="t" style="left:2px;top:3px">/ip firewall filter enable 15<b class="bx"></b>/ip firewall filter</span><span class="t" style="left:2px;top:16px">enable 16<b class="bx"></b></span>
<div style="left:206px;top:1px;width:18px;height:133px;background:#f2f2f8;border-left:1px solid #e4e4e8"><div style="left:1px;top:1px;width:15px;height:16px;background:#ececE6;border:1px solid #f8f8f4;border-bottom-color:#a8a8a4"><svg style="position:absolute;left:3px;top:4px" width="9" height="6" viewBox="0 0 9 6"><path d="M1 5l3.5-3.5l3.5 3.5" fill="none" stroke="#b8b8b0" stroke-width="1.5"/></svg></div><div style="left:1px;top:115px;width:15px;height:17px;background:#ececE6;border:1px solid #f8f8f4;border-bottom-color:#a8a8a4"><svg style="position:absolute;left:3px;top:4px" width="9" height="6" viewBox="0 0 9 6"><path d="M1 1l3.5 3.5l3.5-3.5" fill="none" stroke="#a0a098" stroke-width="1.5"/></svg></div></div>
</div>
<div style="left:3px;top:415px;width:322px;height:21px;border:1px solid #b0b0b4;border-right-color:#f8f8fa;border-bottom-color:#f8f8fa"></div>
<div class="btn" style="left:251px;top:28px;width:69px;height:23px;border:1px solid #000;box-shadow:inset 1px 1px 0 #f6f6f8, inset -1px -1px 0 #8c8c90"><span style="left:0;width:67px;text-align:center;top:5px">OK</span></div>
<div class="btn" style="left:251px;top:54px;width:69px;height:23px;"><span style="left:0;width:67px;text-align:center;top:5px">Cancel</span></div>
<div class="btn" style="left:251px;top:80px;width:69px;height:23px;"><span style="left:0;width:67px;text-align:center;top:5px">Apply</span></div>
<div class="btn" style="left:251px;top:112px;width:69px;height:23px;"><span style="left:0;width:67px;text-align:center;top:5px">Copy</span></div>
<div class="btn" style="left:251px;top:138px;width:69px;height:23px;"><span style="left:0;width:67px;text-align:center;top:5px">Remove</span></div>
<div class="btn" style="left:251px;top:170px;width:69px;height:23px;"><span style="left:0;width:67px;text-align:center;top:5px">Run Script</span></div>
</div>
<div class="win" style="left:731px;top:453px;width:331px;height:420px;box-shadow:inset 1px 1px 0 #ececf0">
<div style="left:0px;top:0px;width:328px;height:22px;background:#4d4fcc"></div>
<span class="title" style="left:5px;top:7px">Script &lt;Jason-Unlock&gt;</span>
<svg style="position:absolute;left:293px;top:4px" width="15" height="15" viewBox="0 0 15 15"><rect x="0.5" y="0.5" width="14" height="14" fill="#f6f6f2" stroke="#1e1e1e"/><rect x="3.5" y="3.5" width="8" height="8" fill="#e8e8e8" stroke="#1e1e1e"/><rect x="3" y="3" width="9" height="2" fill="#1e1e1e"/></svg>
<svg style="position:absolute;left:310px;top:4px" width="15" height="15" viewBox="0 0 15 15"><rect x="0.5" y="0.5" width="14" height="14" fill="#f6f6f2" stroke="#1e1e1e"/><path d="M4 4l7 7M11 4l-7 7" stroke="#1e1e1e" stroke-width="2"/></svg>
<span style="right:235px;top:33px">Name:</span>
<div class="fld" style="left:100px;top:29px;width:135px;height:18px;box-shadow:none;border-color:#a8a8ac"><span style="left:2px;top:3px;background:#b8b8c8">Jason-Unlock</span></div>
<div class="sep" style="left:10px;top:55px;width:225px"></div>
<span style="right:235px;top:68px">Owner:</span>
<div class="ro" style="left:100px;top:64px;width:135px;height:18px"><span style="left:2px;top:3px">eben</span></div>
<div class="grp" style="left:8px;top:95px;width:4px"></div>
<span style="left:17px;top:89px">Policy</span>
<div class="grp" style="left:50px;top:95px;width:185px"></div>
<div class="cb" style="left:14px;top:107px"><svg style="position:absolute;left:1px;top:1px" width="9" height="9" viewBox="0 0 9 9"><path d="M0.8 4.2l2.4 2.8l4.6-5.6" fill="none" stroke="#000" stroke-width="2.2"/></svg></div>
<span style="left:33px;top:107px">reboot</span>
<div class="cb" style="left:125px;top:107px"><svg style="position:absolute;left:1px;top:1px" width="9" height="9" viewBox="0 0 9 9"><path d="M0.8 4.2l2.4 2.8l4.6-5.6" fill="none" stroke="#000" stroke-width="2.2"/></svg></div>
<span style="left:144px;top:107px">read</span>
<div class="cb" style="left:14px;top:126px"><svg style="position:absolute;left:1px;top:1px" width="9" height="9" viewBox="0 0 9 9"><path d="M0.8 4.2l2.4 2.8l4.6-5.6" fill="none" stroke="#000" stroke-width="2.2"/></svg></div>
<span style="left:33px;top:126px">write</span>
<div class="cb" style="left:125px;top:126px"><svg style="position:absolute;left:1px;top:1px" width="9" height="9" viewBox="0 0 9 9"><path d="M0.8 4.2l2.4 2.8l4.6-5.6" fill="none" stroke="#000" stroke-width="2.2"/></svg></div>
<span style="left:144px;top:126px">policy</span>
<div class="cb" style="left:14px;top:145px"><svg style="position:absolute;left:1px;top:1px" width="9" height="9" viewBox="0 0 9 9"><path d="M0.8 4.2l2.4 2.8l4.6-5.6" fill="none" stroke="#000" stroke-width="2.2"/></svg></div>
<span style="left:33px;top:145px">test</span>
<div class="cb" style="left:125px;top:145px"><svg style="position:absolute;left:1px;top:1px" width="9" height="9" viewBox="0 0 9 9"><path d="M0.8 4.2l2.4 2.8l4.6-5.6" fill="none" stroke="#000" stroke-width="2.2"/></svg></div>
<span style="left:144px;top:145px">password</span>
<div class="cb" style="left:14px;top:164px"><svg style="position:absolute;left:1px;top:1px" width="9" height="9" viewBox="0 0 9 9"><path d="M0.8 4.2l2.4 2.8l4.6-5.6" fill="none" stroke="#000" stroke-width="2.2"/></svg></div>
<span style="left:33px;top:164px">sniff</span>
<div class="cb" style="left:125px;top:164px"><svg style="position:absolute;left:1px;top:1px" width="9" height="9" viewBox="0 0 9 9"><path d="M0.8 4.2l2.4 2.8l4.6-5.6" fill="none" stroke="#000" stroke-width="2.2"/></svg></div>
<span style="left:144px;top:164px">sensitive</span>
<div class="sep" style="left:10px;top:189px;width:225px"></div>
<span style="right:235px;top:202px">Last Time Started:</span>
<div class="ro" style="left:100px;top:198px;width:135px;height:18px"><span style="left:2px;top:3px">Jan/19/2012 21:35:34</span></div>
<span style="right:235px;top:227px">Run Count:</span>
<div class="ro" style="left:100px;top:223px;width:135px;height:18px"><span style="left:2px;top:3px">23</span></div>
<div class="sep" style="left:10px;top:249px;width:225px"></div>
<span style="left:8px;top:259px">Source:</span>
<div class="fld" style="left:9px;top:271px;width:226px;height:136px;border-color:#a0a0a4 #fafafa #fafafa #a0a0a4;box-shadow:inset 1px 1px 0 #606064"><span class="t" style="left:2px;top:3px">/ip firewall filter disable 15<b class="bx"></b>/ip firewall filter</span><span class="t" style="left:2px;top:16px">disable 16<b class="bx"></b></span>
<div style="left:206px;top:1px;width:18px;height:133px;background:#f2f2f8;border-left:1px solid #e4e4e8"><div style="left:1px;top:1px;width:15px;height:16px;background:#ececE6;border:1px solid #f8f8f4;border-bottom-color:#a8a8a4"><svg style="position:absolute;left:3px;top:4px" width="9" height="6" viewBox="0 0 9 6"><path d="M1 5l3.5-3.5l3.5 3.5" fill="none" stroke="#b8b8b0" stroke-width="1.5"/></svg></div><div style="left:1px;top:115px;width:15px;height:17px;background:#ececE6;border:1px solid #f8f8f4;border-bottom-color:#a8a8a4"><svg style="position:absolute;left:3px;top:4px" width="9" height="6" viewBox="0 0 9 6"><path d="M1 1l3.5 3.5l3.5-3.5" fill="none" stroke="#a0a098" stroke-width="1.5"/></svg></div></div>
</div>
<div style="left:3px;top:415px;width:322px;height:21px;border:1px solid #b0b0b4;border-right-color:#f8f8fa;border-bottom-color:#f8f8fa"></div>
<div class="btn" style="left:251px;top:28px;width:69px;height:23px;border:1px solid #000;box-shadow:inset 1px 1px 0 #f6f6f8, inset -1px -1px 0 #8c8c90"><span style="left:0;width:67px;text-align:center;top:5px">OK</span></div>
<div class="btn" style="left:251px;top:54px;width:69px;height:23px;"><span style="left:0;width:67px;text-align:center;top:5px">Cancel</span></div>
<div class="btn" style="left:251px;top:80px;width:69px;height:23px;"><span style="left:0;width:67px;text-align:center;top:5px">Apply</span></div>
<div class="btn" style="left:251px;top:112px;width:69px;height:23px;"><span style="left:0;width:67px;text-align:center;top:5px">Copy</span></div>
<div class="btn" style="left:251px;top:138px;width:69px;height:23px;"><span style="left:0;width:67px;text-align:center;top:5px">Remove</span></div>
<div class="btn" style="left:251px;top:170px;width:69px;height:23px;"><span style="left:0;width:67px;text-align:center;top:5px">Run Script</span></div>
</div>
<style>.bx{display:inline-block;width:4px;height:7px;border:1px solid #000;vertical-align:0;margin-left:-1px}</style>
</body></html>
